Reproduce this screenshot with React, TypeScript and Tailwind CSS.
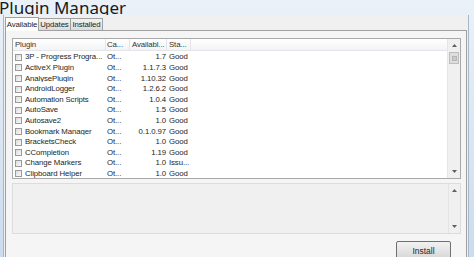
import React from 'react';

type Plugin = { name: string; cat: string; ver: string; status: string };

const plugins: Plugin[] = [
    { name: '3P - Progress Progra...', cat: 'Ot...', ver: '1.7', status: 'Good' },
    { name: 'ActiveX Plugin', cat: 'Ot...', ver: '1.1.7.3', status: 'Good' },
    { name: 'AnalysePlugin', cat: 'Ot...', ver: '1.10.32', status: 'Good' },
    { name: 'AndroidLogger', cat: 'Ot...', ver: '1.2.6.2', status: 'Good' },
    { name: 'Automation Scripts', cat: 'Ot...', ver: '1.0.4', status: 'Good' },
    { name: 'AutoSave', cat: 'Ot...', ver: '1.5', status: 'Good' },
    { name: 'Autosave2', cat: 'Ot...', ver: '1.0', status: 'Good' },
    { name: 'Bookmark Manager', cat: 'Ot...', ver: '0.1.0.97', status: 'Good' },
    { name: 'BracketsCheck', cat: 'Ot...', ver: '1.0', status: 'Good' },
    { name: 'CCompletion', cat: 'Ot...', ver: '1.19', status: 'Good' },
    { name: 'Change Markers', cat: 'Ot...', ver: '1.0', status: 'Issu...' },
    { name: 'Clipboard Helper', cat: 'Ot...', ver: '1.0', status: 'Good' },
];

function Arrow({ up }: { up?: boolean }) {
    return (
        <svg width="5" height="3" viewBox="0 0 5 3" className="block">
            {up ? <path d="M0 3 L2.5 0 L5 3 Z" fill="#606060" /> : <path d="M0 0 L2.5 3 L5 0 Z" fill="#606060" />}
        </svg>
    );
}

export default function App() {
    return (
        <div
            className="w-[474px] h-[257px] overflow-hidden flex flex-col bg-gradient-to-b from-[#eaf1f9] to-[#cbdcee] text-[#1e1e1e]"
            style={{ fontFamily: '"Liberation Sans", Arial, sans-serif' }}
        >
            {/* title */}
            <div className="h-[15px] shrink-0 overflow-hidden">
                <div
                    className="text-[17px] leading-[15px] -ml-[1px] text-[#1a1a1a]"
                    style={{ fontFamily: '"Noto Sans", "Open Sans", sans-serif' }}
                >
                    Plugin Manager
                </div>
            </div>

            <div className="flex-1 flex ml-[3px] mr-[5px] bg-[#f0f0f0] border-l border-r border-[#a9b8c9]">
                <div className="flex-1 flex flex-col pt-[1px] pl-[1px]">
                    {/* tabs */}
                    <div className="flex items-end h-[14px] text-[7.8px] leading-none tracking-[-0.1px]">
                        <div className="w-[34px] h-[14px] bg-white border border-b-0 border-[#a0a0a0] flex items-center justify-center relative z-10 -mb-[1px]">
                            Available
                        </div>
                        <div className="w-[32px] h-[12px] bg-gradient-to-b from-[#f2f2f2] to-[#dcdcdc] border border-l-0 border-b-0 border-[#a0a0a0] flex items-center justify-center">
                            Updates
                        </div>
                        <div className="w-[32px] h-[12px] bg-gradient-to-b from-[#f2f2f2] to-[#dcdcdc] border border-l-0 border-b-0 border-[#a0a0a0] flex items-center justify-center">
                            Installed
                        </div>
                    </div>

                    {/* tab panel */}
                    <div className="flex-1 bg-[#f5f5f5] border border-[#a0a0a0] border-b-0 mr-[1px] flex flex-col pl-[6px] pr-[5px] pt-[7px]">
                        {/* list */}
                        <div className="h-[141px] shrink-0 bg-white border border-[#a8a8a8] flex">
                            <div className="flex-1 flex flex-col overflow-hidden text-[7.8px] leading-none tracking-[-0.1px]">
                                <div className="h-[12px] shrink-0 flex items-center bg-gradient-to-b from-white to-[#f3f4f6] border-b border-[#e3e5e8] text-[#333]">
                                    <div className="w-[93px] pl-[2px] border-r border-[#e5e5e5] h-full flex items-center">Plugin</div>
                                    <div className="w-[24px] pl-[1px] border-r border-[#e5e5e5] h-full flex items-center">Ca...</div>
                                    <div className="w-[37px] pl-[2px] border-r border-[#e5e5e5] h-full flex items-center">Availabl...</div>
                                    <div className="w-[24px] pl-[2px] border-r border-[#e5e5e5] h-full flex items-center">Sta...</div>
                                </div>
                                <div className="flex flex-col pt-[1px]">
                                    {plugins.map((p) => (
                                        <div key={p.name} className="h-[10.6px] flex items-center whitespace-nowrap">
                                            <div className="w-[93px] pl-[2px] flex items-center gap-[3px] overflow-hidden">
                                                <span className="w-[7px] h-[7px] border border-[#9a9a9a] bg-gradient-to-br from-[#dcdcdc] to-[#fafafa] shrink-0" />
                                                <span>{p.name}</span>
                                            </div>
                                            <div className="w-[24px] pl-[1px]">{p.cat}</div>
                                            <div className="w-[37px] text-right pr-[1px]">{p.ver}</div>
                                            <div className="w-[24px] pl-[2px]">{p.status}</div>
                                        </div>
                                    ))}
                                </div>
                            </div>
                            {/* scrollbar */}
                            <div className="w-[13px] shrink-0 bg-[#f0f0f0] border-l border-[#e6e6e6] flex flex-col items-center">
                                <div className="h-[13px] flex items-center justify-center">
                                    <Arrow up />
                                </div>
                                <div className="w-[10px] h-[12px] bg-[#dedede] border border-[#bdbdbd] flex items-center justify-center">
                                    <div className="w-[5px] h-[5px] bg-[#cacaca] border border-[#b5b5b5]" />
                                </div>
                                <div className="flex-1" />
                                <div className="h-[13px] flex items-center justify-center">
                                    <Arrow />
                                </div>
                            </div>
                        </div>

                        {/* description */}
                        <div className="mt-[4px] h-[51px] shrink-0 border border-[#dcdcdc] bg-[#f0f0f0] flex">
                            <div className="flex-1" />
                            <div className="w-[12px] border-l border-[#e4e4e4] flex flex-col items-center justify-between py-[5px]">
                                <Arrow up />
                                <Arrow />
                            </div>
                        </div>

                        {/* buttons */}
                        <div className="flex justify-end mt-[7px] pr-[10px]">
                            <div className="w-[55px] h-[20px] border border-[#707070] rounded-[2px] bg-gradient-to-b from-[#f2f2f2] to-[#d5d5d5] flex items-center justify-center text-[8.5px] text-[#1e1e1e]">
                                Install
                            </div>
                        </div>
                    </div>
                </div>
            </div>
        </div>
    );
}
